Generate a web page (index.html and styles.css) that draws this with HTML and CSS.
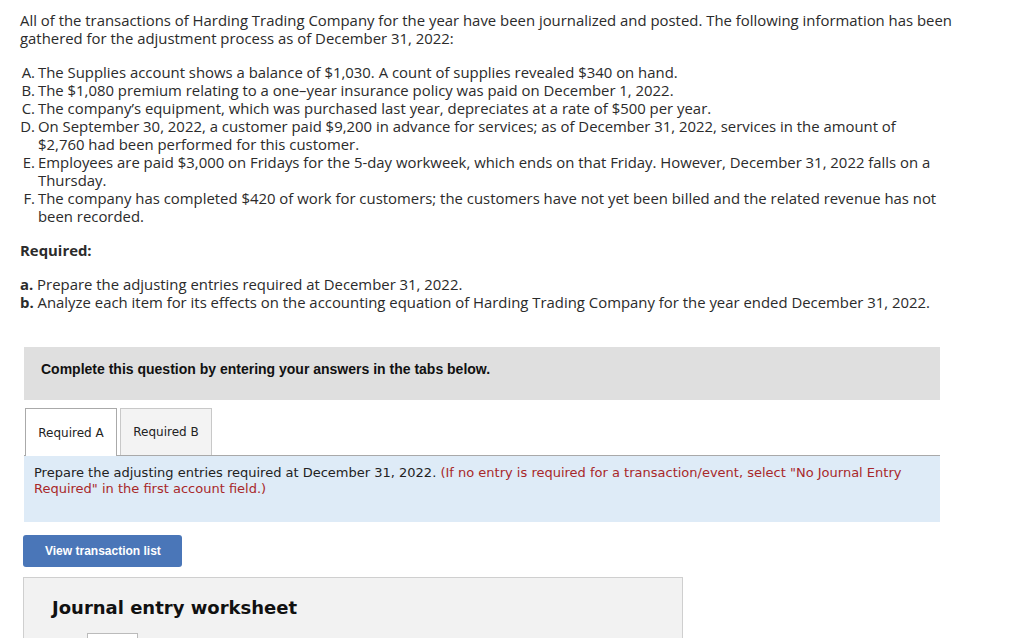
FILE: index.html
```html
<!DOCTYPE html>
<html>
<head>
<meta charset="utf-8">
<link rel="stylesheet" href="styles.css">
</head>
<body>
<div class="page">
  <div class="question">
    <p class="intro">All of the transactions of Harding Trading Company for the year have been journalized and posted. The following information has been gathered for the adjustment process as of December 31, 2022:</p>
    <ol class="items">
      <li><span class="lbl">A.</span><span>The Supplies account shows a balance of $1,030. A count of supplies revealed $340 on hand.</span></li>
      <li><span class="lbl">B.</span><span>The $1,080 premium relating to a one–year insurance policy was paid on December 1, 2022.</span></li>
      <li><span class="lbl">C.</span><span>The company’s equipment, which was purchased last year, depreciates at a rate of $500 per year.</span></li>
      <li><span class="lbl">D.</span><span>On September 30, 2022, a customer paid $9,200 in advance for services; as of December 31, 2022, services in the amount of $2,760 had been performed for this customer.</span></li>
      <li><span class="lbl">E.</span><span>Employees are paid $3,000 on Fridays for the 5-day workweek, which ends on that Friday. However, December 31, 2022 falls on a Thursday.</span></li>
      <li><span class="lbl">F.</span><span>The company has completed $420 of work for customers; the customers have not yet been billed and the related revenue has not been recorded.</span></li>
    </ol>
    <p class="req-title">Required:</p>
    <p class="req-list"><b>a.</b> Prepare the adjusting entries required at December 31, 2022.<br><b>b.</b> Analyze each item for its effects on the accounting equation of Harding Trading Company for the year ended December 31, 2022.</p>
  </div>

  <div class="answer">
    <div class="banner">Complete this question by entering your answers in the tabs below.</div>
    <div class="tabs">
      <div class="tab active">Required A</div>
      <div class="tab">Required B</div>
    </div>
    <div class="instr"><span>Prepare the adjusting entries required at December 31, 2022.</span> <span class="hint">(If no entry is required for a transaction/event, select "No Journal Entry Required" in the first account field.)</span></div>
  </div>

  <button class="btn">View transaction list</button>

  <div class="worksheet">
    <h2>Journal entry worksheet</h2>
    <div class="nav"><div class="navbox"></div></div>
  </div>
</div>
</body>
</html>
```
FILE: styles.css
```css
* { box-sizing: border-box; }
html, body { margin: 0; padding: 0; background: #fff; }
body { overflow: hidden; height: 638px; }
.page { padding: 11px 0 0 20px; width: 1000px; }
.question {
  font-family: "Open Sans", "Liberation Sans", sans-serif;
  font-size: 14.9px;
  line-height: 18px;
  color: #2b2b2b;
  width: 940px;
}
.intro { margin: 0 0 16px 0; }
.items { list-style: none; margin: 0; padding: 0; width: 922px; }
.items li { display: flex; }
.items .lbl { width: 18px; flex: none; text-align: right; padding-right: 3px; box-sizing: content-box; margin-left: -3px; }
.req-title { margin: 16px 0 16px 0; font-weight: bold; }
.req-list { margin: 0; }
.answer { margin: 36px 0 0 4px; width: 916px; }
.banner {
  background: #dfdfdf;
  height: 53px;
  padding: 14px 0 0 17px;
  font-family: "Liberation Sans", Arial, sans-serif;
  font-weight: bold;
  font-size: 14px;
  color: #111;
}
.tabs { display: flex; margin-top: 8px; gap: 3px; padding-left: 1px; }
.tab {
  font-family: "DejaVu Sans", Verdana, sans-serif;
  font-size: 12px;
  color: #222;
  border: 1px solid #c8c8c8;
  border-bottom: none;
  background: #f3f3f3;
  height: 47px;
  width: 92px;
  display: flex;
  align-items: center;
  justify-content: center;
}
.tab.active { background: #fff; border-color: #aaa; height: 48px; margin-bottom: -1px; position: relative; z-index: 1; }
.instr {
  background: #deebf7;
  border-top: 1px solid #a9a9a9;
  height: 67px;
  padding: 9px 10px 0 10px;
  font-family: "DejaVu Sans", Verdana, sans-serif;
  font-size: 13px;
  line-height: 16px;
  color: #222;
}
.hint { color: #a8282a; }
.btn {
  display: block;
  margin: 13px 0 0 3px;
  width: 159px;
  height: 32px;
  background: #4a76b8;
  border: none;
  border-radius: 3px;
  color: #fff;
  font-family: "Liberation Sans", Arial, sans-serif;
  font-weight: bold;
  font-size: 12px;
  text-align: left;
  padding-left: 22px;
}
.worksheet {
  margin: 10px 0 0 3px;
  width: 660px;
  height: 80px;
  background: #f2f2f2;
  border: 1px solid #cfcfcf;
  padding: 19px 0 0 28px;
}
.worksheet h2 {
  margin: 0;
  font-family: "DejaVu Sans", Verdana, sans-serif;
  font-weight: bold;
  font-size: 18px;
  color: #111;
}
.nav { padding: 15px 0 0 35px; }
.navbox { width: 51px; height: 20px; background: #fff; border: 1px solid #bbb; }
```
